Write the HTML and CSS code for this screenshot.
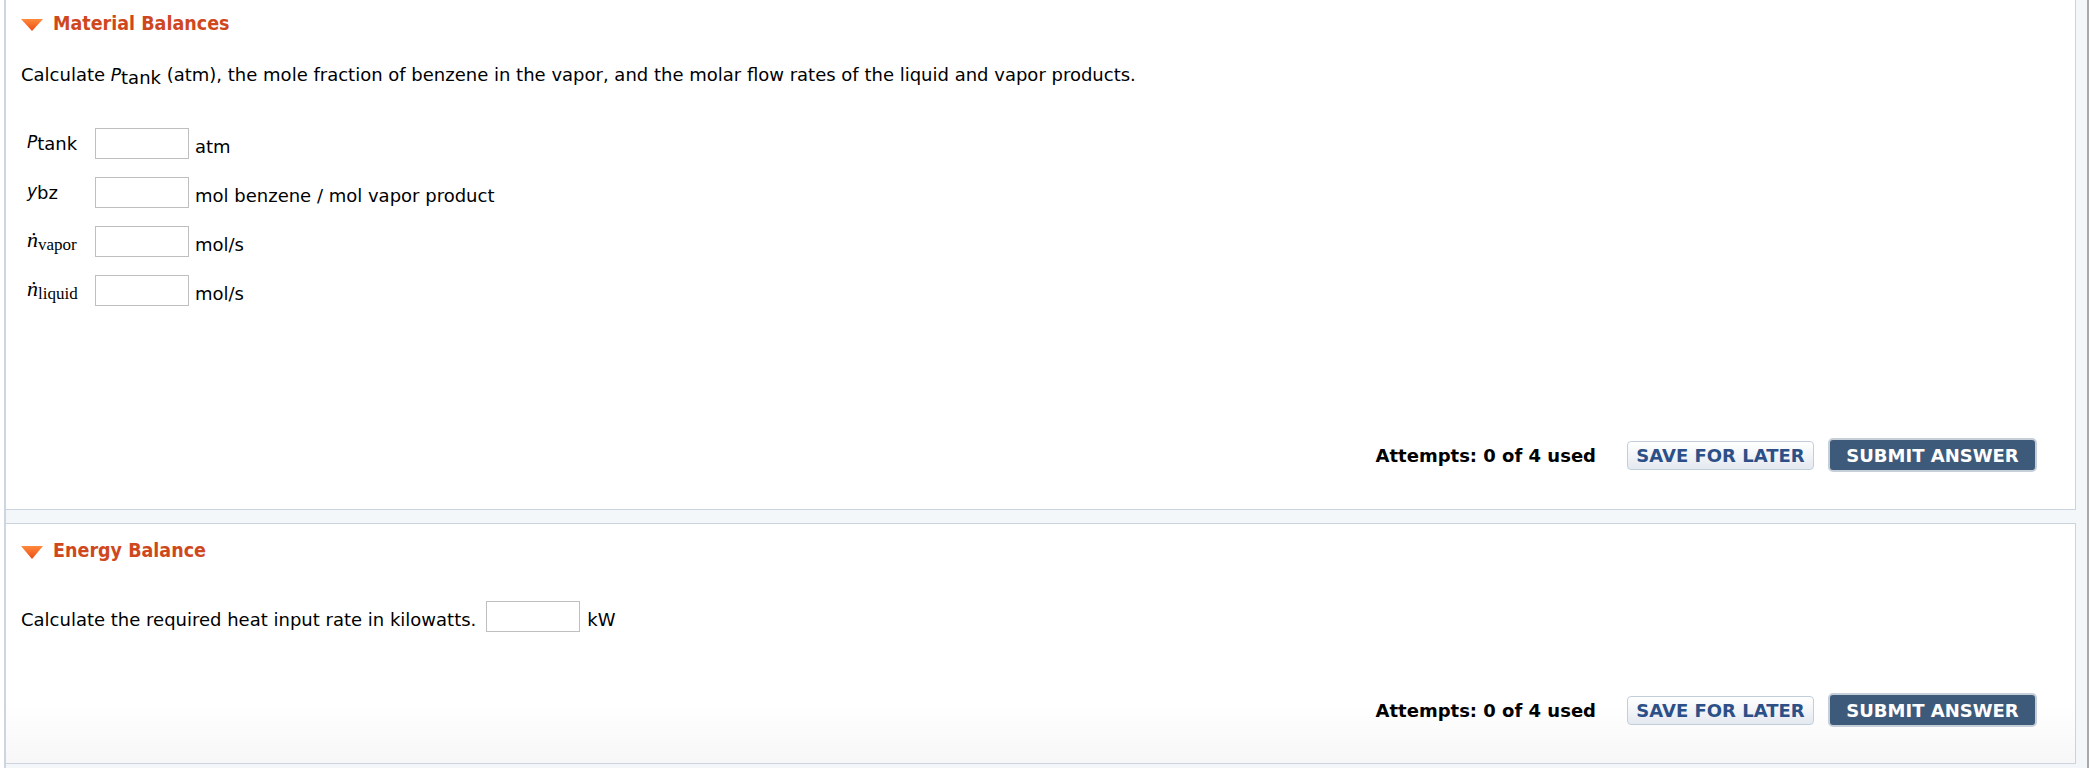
FILE: index.html
```html
<!DOCTYPE html>
<html>
<head>
<meta charset="utf-8">
<title>Material Balances</title>
<link rel="stylesheet" href="styles.css">
</head>
<body>
<div class="wrap">
  <section class="panel">
    <h2 class="ptitle">
      <svg class="tri" width="22" height="12" viewBox="0 0 22 12"><defs><linearGradient id="g1" x1="0" y1="0" x2="0" y2="1"><stop offset="0" stop-color="#ff8a3d"/><stop offset="1" stop-color="#ec4c12"/></linearGradient></defs><polygon points="0,0 22,0 11,12" fill="url(#g1)"/></svg>
      <span>Material Balances</span>
    </h2>
    <p class="desc">Calculate <i class="mv">P</i><span class="msub">tank</span> (atm), the mole fraction of benzene in the vapor, and the molar flow rates of the liquid and vapor products.</p>
    <div class="fields">
      <div class="lbl"><i class="mv">P</i><span class="lsub">tank</span></div>
      <div class="fld"><input class="ans" type="text"><span class="unit">atm</span></div>
      <div class="lbl"><i class="mv">y</i><span class="lsub">bz</span></div>
      <div class="fld"><input class="ans" type="text"><span class="unit">mol benzene / mol vapor product</span></div>
      <div class="lbl lbl-serif"><i class="nv">ṅ</i><span class="ssub">vapor</span></div>
      <div class="fld"><input class="ans" type="text"><span class="unit">mol/s</span></div>
      <div class="lbl lbl-serif"><i class="nv">ṅ</i><span class="ssub">liquid</span></div>
      <div class="fld"><input class="ans" type="text"><span class="unit">mol/s</span></div>
    </div>
    <div class="actions actions-first">
      <span class="attempts">Attempts: 0 of 4 used</span>
      <button class="btn btn-save" type="button">SAVE FOR LATER</button>
      <button class="btn btn-submit" type="button">SUBMIT ANSWER</button>
    </div>
  </section>
  <section class="panel panel-last">
    <h2 class="ptitle">
      <svg class="tri" width="22" height="13" viewBox="0 0 22 13"><defs><linearGradient id="g2" x1="0" y1="0" x2="0" y2="1"><stop offset="0" stop-color="#ff8a3d"/><stop offset="1" stop-color="#ec4c12"/></linearGradient></defs><polygon points="0,0 22,0 11,13" fill="url(#g2)"/></svg>
      <span>Energy Balance</span>
    </h2>
    <div class="inline-q">
      <span class="qtext">Calculate the required heat input rate in kilowatts.</span>
      <input class="ans ans-inline" type="text">
      <span class="unit unit-kw">kW</span>
    </div>
    <div class="actions actions-last">
      <span class="attempts">Attempts: 0 of 4 used</span>
      <button class="btn btn-save" type="button">SAVE FOR LATER</button>
      <button class="btn btn-submit" type="button">SUBMIT ANSWER</button>
    </div>
  </section>
</div>
</body>
</html>
```

FILE: styles.css
```css
html, body {
  margin: 0;
  padding: 0;
  background: #ffffff;
}
body {
  font-family: "DejaVu Sans", "Noto Sans", sans-serif;
  font-size: 18px;
  color: #000;
  height: 768px;
  overflow: hidden;
}
.wrap {
  box-sizing: border-box;
  width: 2085px;
  min-height: 800px;
  margin: -4px 0 0 4px;
  background: #f4f7fa;
  border-left: 2px solid #cdd5e0;
  border-right: 2px solid #a9a9a9;
  padding-right: 11px;
}
.panel {
  background: #ffffff;
  border: 1px solid #cbd3df;
  border-left: none;
  padding: 15px 38px 37px 15px;
}
.panel-last {
  margin-top: 13px;
  padding-bottom: 36px;
  background: linear-gradient(to bottom, #ffffff 75%, #f7f7f7 100%);
}
.ptitle {
  margin: 0;
  display: flex;
  align-items: flex-start;
  font-family: "DejaVu Sans Condensed", "DejaVu Sans", sans-serif;
  font-size: 19.5px;
  line-height: 24px;
  font-weight: bold;
  color: #cf481d;
}
.tri {
  margin-top: 7px;
  margin-right: 10px;
  flex: none;
}
.desc {
  margin: 28px 0 0;
  line-height: 22px;
}
.mv {
  font-style: italic;
  font-size: 17px;
}
.msub {
  vertical-align: -3px;
  line-height: 0;
}
.fields {
  margin-top: 42px;
  padding-left: 6px;
  display: grid;
  grid-template-columns: 68px auto;
  justify-content: start;
  row-gap: 18px;
}
.lbl {
  padding-top: 3px;
  line-height: 22px;
  white-space: nowrap;
}
.lsub {
  vertical-align: -2px;
  line-height: 0;
}
.lbl-serif {
  font-family: "Liberation Serif", "DejaVu Serif", serif;
}
.nv {
  font-style: italic;
  font-size: 22px;
}
.ssub {
  font-size: 17px;
  vertical-align: -3px;
  line-height: 0;
}
.fld {
  display: flex;
  align-items: flex-end;
}
.ans {
  box-sizing: border-box;
  width: 94px;
  height: 31px;
  margin: 0;
  padding: 0 4px;
  border: 1px solid #bfbfbf;
  background: #fff;
  font: inherit;
}
.unit {
  margin-left: 6px;
  line-height: 22px;
  padding-bottom: 1px;
  white-space: nowrap;
}
.inline-q {
  margin-top: 38px;
  display: flex;
  align-items: flex-end;
}
.qtext {
  line-height: 22px;
  padding-bottom: 1px;
}
.ans-inline {
  margin-left: 10px;
}
.unit-kw {
  margin-left: 7px;
}
.actions {
  display: flex;
  justify-content: flex-end;
  align-items: center;
  height: 34px;
}
.actions-first {
  margin-top: 132px;
}
.actions-last {
  margin-top: 61px;
}
.attempts {
  font-weight: bold;
  font-size: 18px;
  margin-right: 31px;
}
.btn {
  box-sizing: border-box;
  font-family: "DejaVu Sans", sans-serif;
  font-weight: bold;
  font-size: 18px;
  padding: 0;
  cursor: pointer;
}
.btn-save {
  width: 187px;
  height: 29px;
  margin-right: 14px;
  border: 1px solid #c3cedb;
  border-radius: 4px;
  background: linear-gradient(to bottom, #ffffff, #e4e9f0);
  color: #2c4f87;
}
.btn-submit {
  width: 209px;
  height: 34px;
  border: 2px solid #c6ced8;
  border-radius: 5px;
  background: #3e5a7a;
  color: #ffffff;
}
```
